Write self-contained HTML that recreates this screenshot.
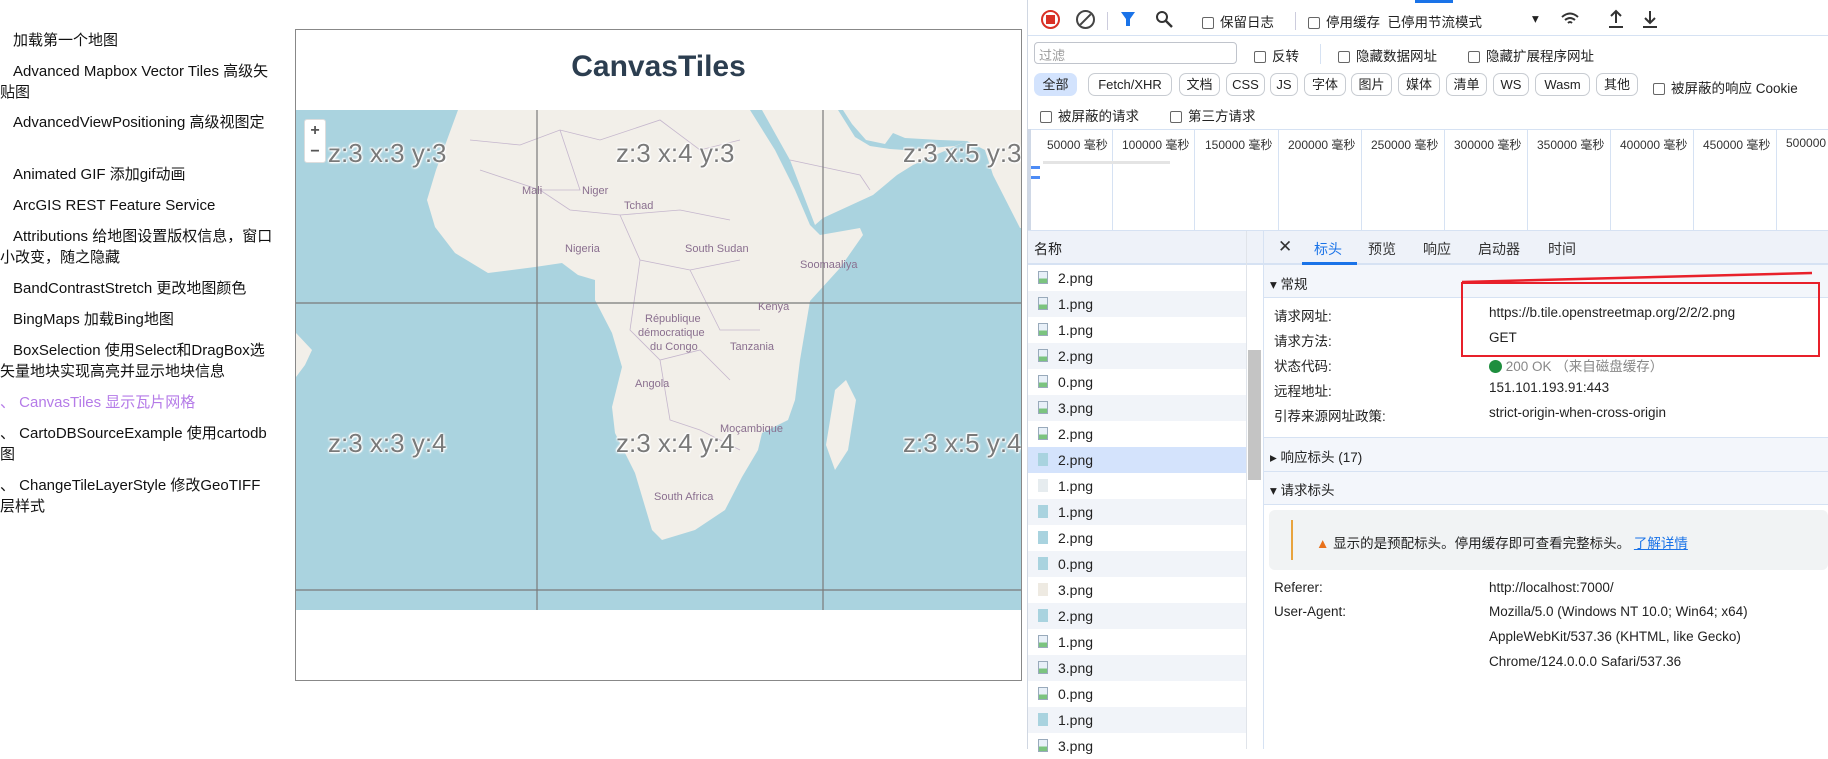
<!DOCTYPE html><html><head><meta charset="utf-8"><style>
*{margin:0;padding:0;box-sizing:border-box}
body{width:1828px;height:749px;overflow:hidden;background:#fff;font-family:"Liberation Sans","Noto Sans CJK SC",sans-serif;position:relative}
.a{position:absolute;white-space:nowrap}
.l{font-size:15px;color:#111;line-height:21px}
.d{font-size:13.5px;color:#222}
.lab{font-size:26px;color:#7a7a7a;text-shadow:0 0 3px #fff,0 0 3px #fff,0 0 2px #fff,1px 1px 1px #fff,-1px -1px 1px #fff}
.btn{position:absolute;top:73px;height:23px;border:1px solid #c8ccd2;border-radius:7px;font-size:13px;line-height:21px;text-align:center;color:#222}
.cb{display:inline-block;width:12px;height:12px;border:1px solid #666;border-radius:2px;vertical-align:-2px;margin-right:6px}
.row{position:absolute;left:1028px;width:218px;height:26px;font-size:14px;line-height:26px;padding-left:30px;color:#222}
.row i{position:absolute;left:10px;top:6px;width:10px;height:13px;border:1px solid #9ab;background:linear-gradient(#e8f0f8 60%,#7bc47f 60%)}
.tl{position:absolute;top:129px;height:101px;border-left:1px solid #d6e2f3}
</style></head><body>
<div class="a l" style="left:13px;top:30px">加载第一个地图</div>
<div class="a l" style="left:13px;top:61px">Advanced Mapbox Vector Tiles 高级矢</div>
<div class="a l" style="left:0;top:82px">贴图</div>
<div class="a l" style="left:13px;top:112px">AdvancedViewPositioning 高级视图定</div>
<div class="a l" style="left:13px;top:164px">Animated GIF 添加gif动画</div>
<div class="a l" style="left:13px;top:195px">ArcGIS REST Feature Service</div>
<div class="a l" style="left:13px;top:226px">Attributions 给地图设置版权信息，窗口</div>
<div class="a l" style="left:0;top:247px">小改变，随之隐藏</div>
<div class="a l" style="left:13px;top:278px">BandContrastStretch 更改地图颜色</div>
<div class="a l" style="left:13px;top:309px">BingMaps 加载Bing地图</div>
<div class="a l" style="left:13px;top:340px">BoxSelection 使用Select和DragBox选</div>
<div class="a l" style="left:0;top:361px">矢量地块实现高亮并显示地块信息</div>
<div class="a l" style="left:0;top:392px;color:#b57be8">、 CanvasTiles 显示瓦片网格</div>
<div class="a l" style="left:0;top:423px">、 CartoDBSourceExample 使用cartodb</div>
<div class="a l" style="left:0;top:444px">图</div>
<div class="a l" style="left:0;top:475px">、 ChangeTileLayerStyle 修改GeoTIFF</div>
<div class="a l" style="left:0;top:496px">层样式</div>
<div class="a" style="left:295px;top:29px;width:727px;height:652px;border:1px solid #888"></div>
<div class="a" style="left:295px;top:50px;width:727px;text-align:center;font-size:30px;font-weight:bold;color:#2c3e50">CanvasTiles</div>
<svg class="a" style="left:296px;top:110px" width="725" height="500" viewBox="296 110 725 500">
<rect x="296" y="110" width="725" height="500" fill="#aad3df"/>
<path fill="#f2efe9" d="M458 110 L447 140 L436 170 L427 200 L435 227 L455 253 L488 273 L535 267 L562 263 L578 275 L595 280 L595 300 L612 333 L622 367 L612 407 L615 433 L635 473 L652 530 L662 540 L695 530 L725 510 L742 477 L758 450 L762 433 L788 420 L795 400 L800 360 L810 301 L840 268 L863 235 L860 228 L820 235 L810 225 L795 190 L775 150 L750 110 Z"/>
<path fill="#f2efe9" d="M762 110 L790 160 L815 225 L823 218 L873 195 L897 175 L913 165 L967 141 L985 150 L993 175 L1020 228 L1021 228 L1021 110 Z"/>
<path fill="#aad3df" d="M843 110 L852 124 L866 140 L885 144 L893 133 L905 138 L940 140 L967 141 L955 146 L905 150 L890 149 L870 146 L855 137 L838 110 Z"/>
<path fill="#f2efe9" d="M835 390 L846 380 L856 400 L848 450 L835 470 L826 445 Z"/>
<path fill="#f2efe9" d="M296 333 L312 350 L305 365 L296 377 Z"/>
<g fill="none" stroke="#b9a7c6" stroke-width="0.8" opacity="0.8">
<path d="M470 140 L520 145 L560 130 L600 140 L660 120 L700 150 L740 140 M480 170 L540 190 L570 210 L620 215 L680 210 L730 220 M560 130 L580 190 L540 190 M620 215 L640 260 L690 270 L740 260 M640 260 L630 330 L660 360 L700 350 L730 380 M660 360 L670 420 L700 430 L740 450 M690 270 L720 330 L760 330 M790 160 L860 175 L870 190"/>
</g>
<g stroke="#7a7a7a" stroke-width="1.2"><line x1="537" y1="110" x2="537" y2="610"/><line x1="823" y1="110" x2="823" y2="610"/><line x1="296" y1="303" x2="1021" y2="303"/><line x1="296" y1="590" x2="1021" y2="590"/></g>
<g font-family="Liberation Sans,sans-serif" font-size="11" fill="#8a6f8f">
<text x="522" y="194">Mali</text><text x="582" y="194">Niger</text><text x="624" y="209">Tchad</text><text x="565" y="252">Nigeria</text><text x="685" y="252">South Sudan</text><text x="800" y="268">Soomaaliya</text><text x="758" y="310">Kenya</text><text x="645" y="322">République</text><text x="638" y="336">démocratique</text><text x="650" y="350">du Congo</text><text x="730" y="350">Tanzania</text><text x="635" y="387">Angola</text><text x="720" y="432">Moçambique</text><text x="654" y="500">South Africa</text>
</g></svg>
<div class="a lab" style="left:328px;top:138px">z:3 x:3 y:3</div>
<div class="a lab" style="left:616px;top:138px">z:3 x:4 y:3</div>
<div class="a lab" style="left:903px;top:138px;width:118px;overflow:hidden">z:3 x:5 y:3</div>
<div class="a lab" style="left:328px;top:428px">z:3 x:3 y:4</div>
<div class="a lab" style="left:616px;top:428px">z:3 x:4 y:4</div>
<div class="a lab" style="left:903px;top:428px;width:118px;overflow:hidden">z:3 x:5 y:4</div>
<div class="a" style="left:304px;top:119px;width:22px;height:44px;background:#fff;border-radius:3px;border:1px solid #ddd;font-size:16px;font-weight:bold;color:#555;text-align:center;line-height:21px">+<br>−</div>
<div class="a" style="left:1027px;top:0;width:1px;height:749px;background:#d0d7e2"></div>
<div class="a" style="left:1415px;top:0;width:38px;height:3px;background:#1a73e8"></div>
<div class="a" style="left:1028px;top:35px;width:800px;height:1px;background:#d6e2f3"></div>
<div class="a" style="left:1041px;top:10px;width:19px;height:19px;border:2px solid #d93025;border-radius:50%"><div style="margin:3px;width:9px;height:9px;background:#d93025"></div></div>
<div class="a" style="left:1076px;top:10px;width:19px;height:19px;border:2px solid #444;border-radius:50%;overflow:hidden"><div style="position:absolute;left:6px;top:-3px;width:2px;height:22px;background:#444;transform:rotate(45deg)"></div></div>
<svg class="a" style="left:1120px;top:11px" width="16" height="16"><path d="M1 1H15L10 8V15H6V8Z" fill="#1a73e8"/></svg>
<svg class="a" style="left:1155px;top:10px" width="19" height="19"><circle cx="7" cy="7" r="5" stroke="#333" stroke-width="2" fill="none"/><line x1="11" y1="11" x2="17" y2="17" stroke="#333" stroke-width="2.4"/></svg>
<div class="a d" style="left:1202px;top:11px"><span class="cb"></span>保留日志</div>
<div class="a d" style="left:1308px;top:11px"><span class="cb"></span>停用缓存 &nbsp;已停用节流模式</div>
<div class="a d" style="left:1532px;top:11px">▾</div>
<div class="a" style="left:1107px;top:12px;width:1px;height:18px;background:#ccd"></div>
<div class="a" style="left:1295px;top:12px;width:1px;height:18px;background:#ccd"></div>
<svg class="a" style="left:1560px;top:10px" width="20" height="18"><path d="M2 7Q10 0 18 7M5 10Q10 6 15 10M8 13Q10 11 12 13" stroke="#333" stroke-width="2" fill="none"/></svg>
<svg class="a" style="left:1608px;top:9px" width="16" height="20"><path d="M8 14V2M3 7L8 2L13 7M1 18H15" stroke="#333" stroke-width="2" fill="none"/></svg>
<svg class="a" style="left:1642px;top:9px" width="16" height="20"><path d="M8 2V14M3 9L8 14L13 9M1 18H15" stroke="#333" stroke-width="2" fill="none"/></svg>
<div class="a" style="left:1034px;top:42px;width:203px;height:22px;border:1px solid #c0c4cc;border-radius:4px;font-size:13px;color:#999;padding:2px 4px">过滤</div>
<div class="a d" style="left:1254px;top:45px"><span class="cb"></span>反转</div>
<div class="a" style="left:1320px;top:44px;width:1px;height:20px;background:#d6e2f3"></div>
<div class="a d" style="left:1338px;top:45px"><span class="cb"></span>隐藏数据网址</div>
<div class="a d" style="left:1468px;top:45px"><span class="cb"></span>隐藏扩展程序网址</div>
<div class="btn" style="left:1034px;width:43px;background:#d3e3fd;border-color:#d3e3fd">全部</div>
<div class="btn" style="left:1088px;width:84px">Fetch/XHR</div>
<div class="btn" style="left:1179px;width:41px">文档</div>
<div class="btn" style="left:1226px;width:39px">CSS</div>
<div class="btn" style="left:1270px;width:28px">JS</div>
<div class="btn" style="left:1304px;width:42px">字体</div>
<div class="btn" style="left:1351px;width:41px">图片</div>
<div class="btn" style="left:1398px;width:42px">媒体</div>
<div class="btn" style="left:1446px;width:41px">清单</div>
<div class="btn" style="left:1493px;width:36px">WS</div>
<div class="btn" style="left:1535px;width:55px">Wasm</div>
<div class="btn" style="left:1596px;width:42px">其他</div>
<div class="a d" style="left:1653px;top:77px"><span class="cb"></span>被屏蔽的响应 Cookie</div>
<div class="a d" style="left:1040px;top:105px"><span class="cb"></span>被屏蔽的请求</div>
<div class="a d" style="left:1170px;top:105px"><span class="cb"></span>第三方请求</div>
<div class="a" style="left:1028px;top:129px;width:800px;height:1px;background:#d6e2f3"></div>
<div class="a" style="left:1028px;top:129px;width:3px;height:101px;background:#cfd8e6"></div>
<div class="tl" style="left:1112px"></div><div class="tl" style="left:1194px"></div><div class="tl" style="left:1278px"></div><div class="tl" style="left:1361px"></div><div class="tl" style="left:1444px"></div><div class="tl" style="left:1527px"></div><div class="tl" style="left:1610px"></div><div class="tl" style="left:1693px"></div><div class="tl" style="left:1776px"></div>
<div class="a" style="left:1047px;top:136px;font-size:12px;color:#333">50000 毫秒</div>
<div class="a" style="left:1122px;top:136px;font-size:12px;color:#333">100000 毫秒</div>
<div class="a" style="left:1205px;top:136px;font-size:12px;color:#333">150000 毫秒</div>
<div class="a" style="left:1288px;top:136px;font-size:12px;color:#333">200000 毫秒</div>
<div class="a" style="left:1371px;top:136px;font-size:12px;color:#333">250000 毫秒</div>
<div class="a" style="left:1454px;top:136px;font-size:12px;color:#333">300000 毫秒</div>
<div class="a" style="left:1537px;top:136px;font-size:12px;color:#333">350000 毫秒</div>
<div class="a" style="left:1620px;top:136px;font-size:12px;color:#333">400000 毫秒</div>
<div class="a" style="left:1703px;top:136px;font-size:12px;color:#333">450000 毫秒</div>
<div class="a" style="left:1786px;top:136px;font-size:12px;color:#333">500000</div>
<div class="a" style="left:1043px;top:161px;width:127px;height:3px;background:#e4e4e4"></div>
<div class="a" style="left:1031px;top:166px;width:9px;height:3px;background:#4c8bf5"></div>
<div class="a" style="left:1031px;top:176px;width:9px;height:3px;background:#4c8bf5"></div>
<div class="a" style="left:1028px;top:230px;width:800px;height:1px;background:#d6e2f3"></div>
<div class="a" style="left:1028px;top:231px;width:800px;height:33px;background:#eef2f9"></div>
<div class="a" style="left:1028px;top:263px;width:800px;height:2px;background:#d6e2f3"></div>
<div class="a" style="left:1034px;top:239px;font-size:14px;color:#222">名称</div>
<div class="a" style="left:1246px;top:231px;width:1px;height:518px;background:#e0e4ea"></div>
<div class="a" style="left:1263px;top:231px;width:1px;height:518px;background:#d6e2f3"></div>
<div class="a" style="left:1248px;top:350px;width:13px;height:130px;background:#c4c4c4"></div>
<div class="a" style="left:1278px;top:237px;font-size:17px;color:#333">✕</div>
<div class="a" style="left:1314px;top:239px;font-size:14px;color:#1a73e8">标头</div>
<div class="a" style="left:1302px;top:262px;width:55px;height:3px;background:#1a73e8"></div>
<div class="a" style="left:1368px;top:239px;font-size:14px;color:#333">预览</div>
<div class="a" style="left:1423px;top:239px;font-size:14px;color:#333">响应</div>
<div class="a" style="left:1478px;top:239px;font-size:14px;color:#333">启动器</div>
<div class="a" style="left:1548px;top:239px;font-size:14px;color:#333">时间</div>
<div class="row" style="top:265px">2.png<i></i></div>
<div class="row" style="top:291px;background:#f1f4f9">1.png<i></i></div>
<div class="row" style="top:317px">1.png<i></i></div>
<div class="row" style="top:343px;background:#f1f4f9">2.png<i></i></div>
<div class="row" style="top:369px">0.png<i></i></div>
<div class="row" style="top:395px;background:#f1f4f9">3.png<i></i></div>
<div class="row" style="top:421px">2.png<i></i></div>
<div class="row" style="top:447px;background:#d4e3fc">2.png<i style="background:#a9d3df;border:0"></i></div>
<div class="row" style="top:473px">1.png<i style="background:#e6ecef;border:0"></i></div>
<div class="row" style="top:499px;background:#f1f4f9">1.png<i style="background:#a9d3df;border:0"></i></div>
<div class="row" style="top:525px">2.png<i style="background:#a9d3df;border:0"></i></div>
<div class="row" style="top:551px;background:#f1f4f9">0.png<i style="background:#a9d3df;border:0"></i></div>
<div class="row" style="top:577px">3.png<i style="background:#eeeae2;border:0"></i></div>
<div class="row" style="top:603px;background:#f1f4f9">2.png<i style="background:#a9d3df;border:0"></i></div>
<div class="row" style="top:629px">1.png<i></i></div>
<div class="row" style="top:655px;background:#f1f4f9">3.png<i></i></div>
<div class="row" style="top:681px">0.png<i></i></div>
<div class="row" style="top:707px;background:#f1f4f9">1.png<i style="background:#a9d3df;border:0"></i></div>
<div class="row" style="top:733px">3.png<i></i></div>
<div class="a" style="left:1264px;top:265px;width:564px;height:32px;background:#f3f6fb"></div>
<div class="a" style="left:1264px;top:297px;width:564px;height:1px;background:#d6e2f3"></div>
<div class="a d" style="left:1270px;top:273px">▾ 常规</div>
<div class="a d" style="left:1274px;top:305px">请求网址:</div><div class="a d" style="left:1489px;top:305px">https://b.tile.openstreetmap.org/2/2/2.png</div>
<div class="a d" style="left:1274px;top:330px">请求方法:</div><div class="a d" style="left:1489px;top:330px">GET</div>
<div class="a d" style="left:1274px;top:355px">状态代码:</div><div class="a d" style="left:1489px;top:355px;color:#888"><span style="display:inline-block;width:13px;height:13px;border-radius:50%;background:#1e8e3e;vertical-align:-2px"></span> 200 OK （来自磁盘缓存）</div>
<div class="a d" style="left:1274px;top:380px">远程地址:</div><div class="a d" style="left:1489px;top:380px">151.101.193.91:443</div>
<div class="a d" style="left:1274px;top:405px">引荐来源网址政策:</div><div class="a d" style="left:1489px;top:405px">strict-origin-when-cross-origin</div>
<div class="a" style="left:1264px;top:437px;width:564px;height:68px;background:#f3f6fb;border-top:1px solid #d6e2f3;border-bottom:1px solid #d6e2f3"></div>
<div class="a" style="left:1264px;top:471px;width:564px;height:1px;background:#d6e2f3"></div>
<div class="a d" style="left:1270px;top:446px">▸ 响应标头 (17)</div>
<div class="a d" style="left:1270px;top:479px">▾ 请求标头</div>
<div class="a" style="left:1269px;top:510px;width:559px;height:60px;background:#f1f3f4;border-radius:6px"></div>
<div class="a" style="left:1291px;top:520px;width:2px;height:40px;background:#e8a33d"></div>
<div class="a d" style="left:1316px;top:532px;color:#222"><span style="color:#e8711a">▲</span> 显示的是预配标头。停用缓存即可查看完整标头。 <span style="color:#1a73e8;text-decoration:underline">了解详情</span></div>
<div class="a d" style="left:1274px;top:580px">Referer:</div><div class="a d" style="left:1489px;top:580px">http://localhost:7000/</div>
<div class="a d" style="left:1274px;top:604px">User-Agent:</div><div class="a d" style="left:1489px;top:604px">Mozilla/5.0 (Windows NT 10.0; Win64; x64)</div>
<div class="a d" style="left:1489px;top:629px">AppleWebKit/537.36 (KHTML, like Gecko)</div>
<div class="a d" style="left:1489px;top:654px">Chrome/124.0.0.0 Safari/537.36</div>
<div class="a" style="left:1461px;top:282px;width:359px;height:75px;border:2px solid #e8202a"></div>
<svg class="a" style="left:1455px;top:268px" width="370" height="20"><path d="M7 14L357 5" stroke="#e8202a" stroke-width="2.5"/></svg>
</body></html>
